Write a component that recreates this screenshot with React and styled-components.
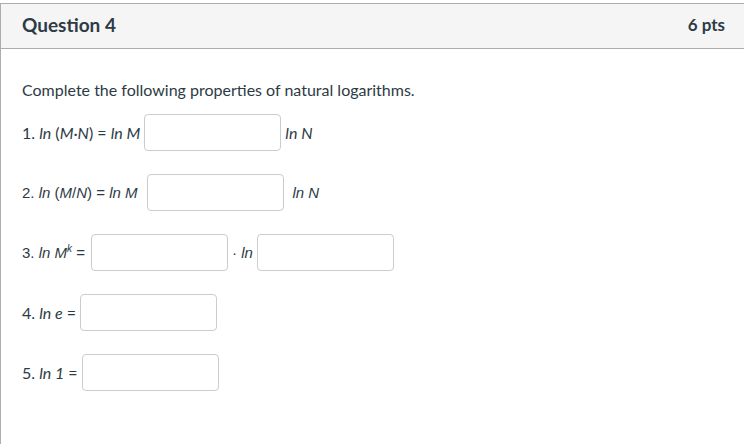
import React from 'react'
import styled, { createGlobalStyle, css } from 'styled-components'

const GlobalStyle = createGlobalStyle`
  html, body {
    margin: 0;
    padding: 0;
    background: #fff;
    overflow: hidden;
  }
  body {
    font-family: Lato, "Liberation Sans", sans-serif;
    color: #2d3b45;
  }
`

const Page = styled.div`
  padding-top: 3px;
  width: 746px;
`

const Card = styled.div`
  border: 1px solid #adadad;
  height: 460px;
`

const Header = styled.div`
  display: flex;
  justify-content: space-between;
  align-items: center;
  box-sizing: border-box;
  height: 45px;
  padding: 0 20px 4px 21px;
  background: #f5f5f5;
  border-bottom: 1px solid #adadad;
`

const Title = styled.h2`
  margin: 0;
  font-size: 19px;
  font-weight: 700;
  color: #2d3b45;
`

const Points = styled.span`
  font-size: 17px;
  font-weight: 700;
  color: #2d3b45;
`

const Body = styled.div`
  padding: 31px 21px 0;
`

const Prompt = styled.p`
  margin: 0 0 14px;
  font-size: 16px;
  line-height: 20px;
`

const Row = styled.div`
  display: flex;
  align-items: center;
  height: 37px;
  margin-bottom: 23px;
  font-size: 16px;
  white-space: pre;
  ${(p) =>
    p.$arial &&
    css`
      font-family: 'Liberation Sans', Arial, sans-serif;
      font-size: 15px;
    `}
`

const Label = styled.span`
  margin-right: ${(p) => p.$gap || 4}px;
`

const Em = styled.i`
  font-style: italic;
`

const Sup = styled.sup`
  font-size: 10px;
  font-style: italic;
  vertical-align: 6px;
  line-height: 0;
`

const Blank = styled.input`
  box-sizing: border-box;
  width: 137px;
  height: 37px;
  margin: 0 ${(p) => p.$after || 4}px 0 0;
  border: 1px solid #c7cdd1;
  border-radius: 4px;
  background: #fff;
  padding: 0 8px;
  font: inherit;
  outline: none;
`

export default function App() {
  return (
    <Page>
      <GlobalStyle />
      <Card>
        <Header>
          <Title>Question 4</Title>
          <Points>6 pts</Points>
        </Header>
        <Body>
          <Prompt>Complete the following properties of natural logarithms.</Prompt>

          <Row>
            <Label>1. <Em>ln</Em> (<Em>M</Em>·<Em>N</Em>) = <Em>ln M</Em></Label>
            <Blank type="text" />
            <Em>ln N</Em>
          </Row>

          <Row $arial>
            <Label $gap={9}>2. <Em>ln</Em> (<Em>M</Em>/<Em>N</Em>) = <Em>ln M</Em></Label>
            <Blank type="text" $after={9} />
            <Em>ln N</Em>
          </Row>

          <Row $arial>
            <Label $gap={6}>3. <Em>ln M</Em><Sup>k</Sup> =</Label>
            <Blank type="text" />
            <Label>· <Em>ln</Em></Label>
            <Blank type="text" />
          </Row>

          <Row>
            <Label>4. <Em>ln e</Em> =</Label>
            <Blank type="text" />
          </Row>

          <Row>
            <Label>5. <Em>ln 1</Em> =</Label>
            <Blank type="text" />
          </Row>
        </Body>
      </Card>
    </Page>
  )
}
